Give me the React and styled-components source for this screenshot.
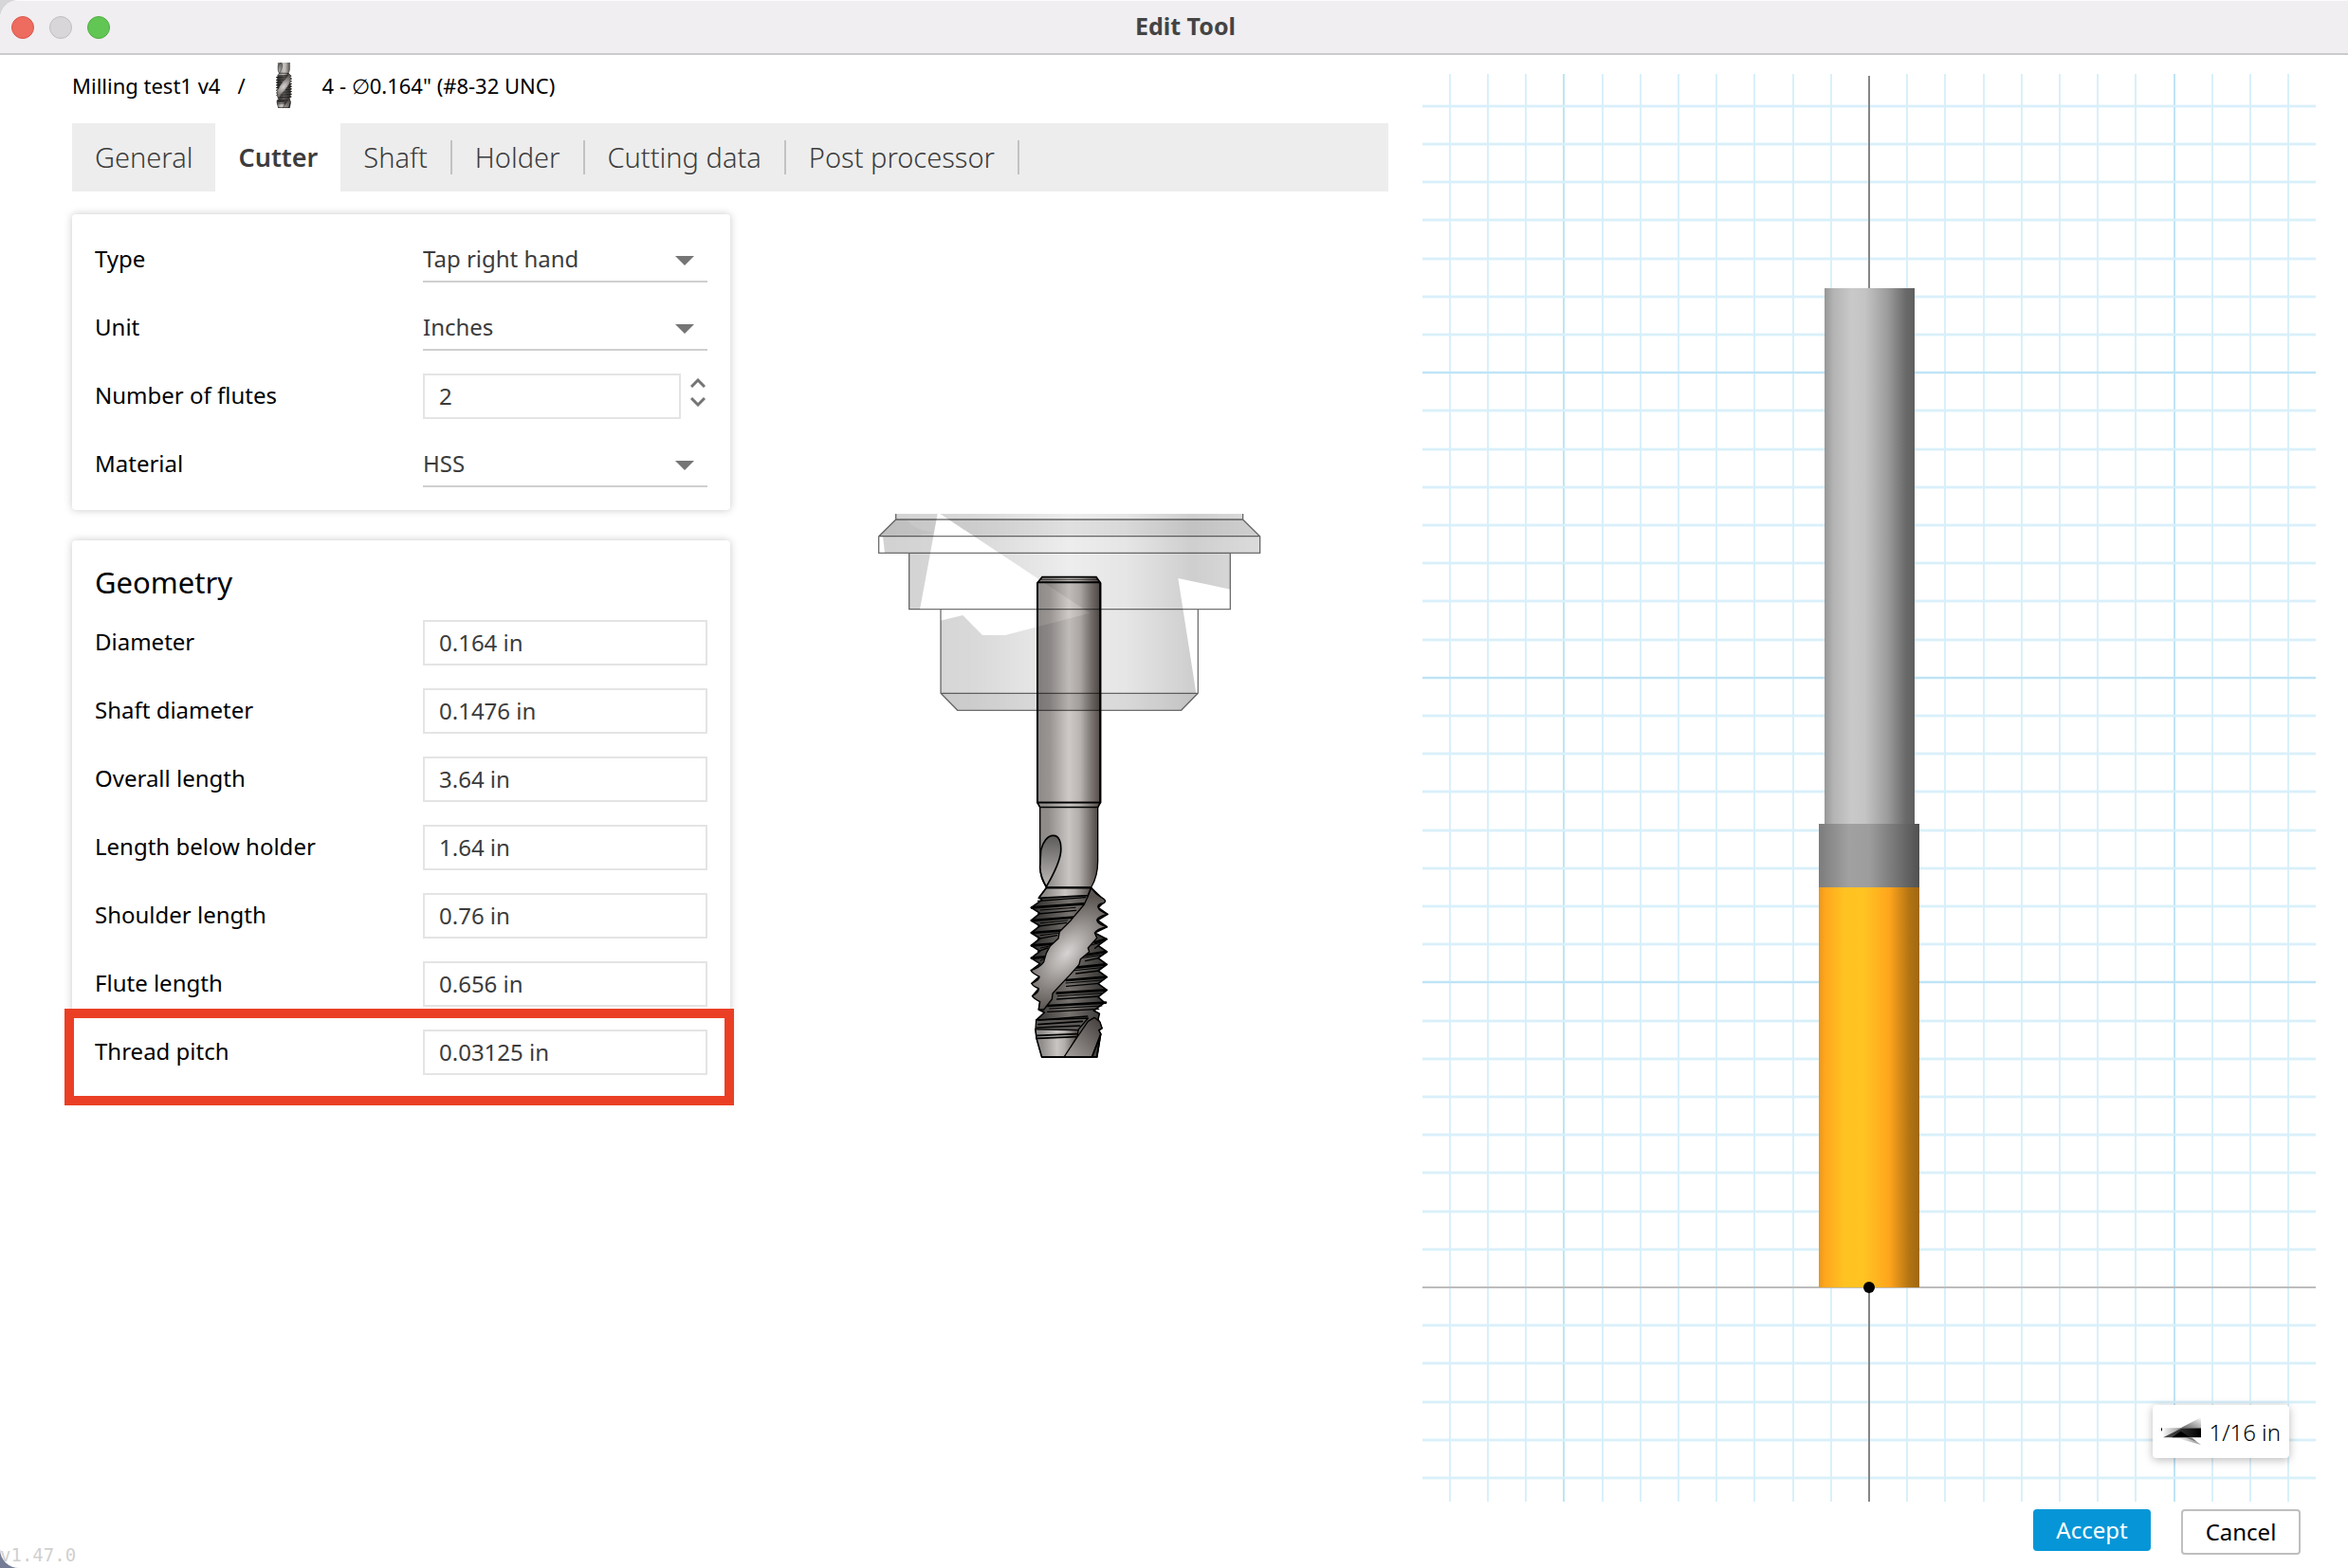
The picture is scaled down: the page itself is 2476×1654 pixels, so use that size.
import React, { useId, useState } from 'react';
import styled, { createGlobalStyle } from 'styled-components';

const tabs = ['General', 'Cutter', 'Shaft', 'Holder', 'Cutting data', 'Post processor'];

const geometry = [
    { id: 'diameter', label: 'Diameter', value: '0.164 in' },
    { id: 'shaft-diameter', label: 'Shaft diameter', value: '0.1476 in' },
    { id: 'overall-length', label: 'Overall length', value: '3.64 in' },
    { id: 'below-holder', label: 'Length below holder', value: '1.64 in' },
    { id: 'shoulder-length', label: 'Shoulder length', value: '0.76 in' },
    { id: 'flute-length', label: 'Flute length', value: '0.656 in' },
    { id: 'thread-pitch', label: 'Thread pitch', value: '0.03125 in', marked: true },
];

// lower part of the tap: neck, threads and point
const TapTip = () => {
    const id = useId();
    const left = [412, 453, 492, 532, 572];
    const right = [512, 552, 592, 632, 673, 713];
    return (
        <g strokeLinejoin="round" strokeLinecap="round">
            <defs>
                <linearGradient id={`${id}neck`}>
                    <stop offset="0" stopColor="#8b8886" />
                    <stop offset=".15" stopColor="#918e8c" />
                    <stop offset=".5" stopColor="#c9c5c2" />
                    <stop offset=".68" stopColor="#b1adaa" />
                    <stop offset="1" stopColor="#4f4845" />
                </linearGradient>
                <linearGradient id={`${id}drop`} x1="0" y1="0" x2="0" y2="1">
                    <stop offset="0" stopColor="#5c5a59" />
                    <stop offset="1" stopColor="#bdbab8" />
                </linearGradient>
                <linearGradient id={`${id}thread`}>
                    <stop offset="0" stopColor="#2c2b2a" />
                    <stop offset=".5" stopColor="#77736f" />
                    <stop offset="1" stopColor="#302e2d" />
                </linearGradient>
                <radialGradient id={`${id}flute`} gradientUnits="userSpaceOnUse" cx="0" cy="0" r="1" gradientTransform="translate(196 556) rotate(-50) scale(210 120)">
                    <stop offset="0" stopColor="#d6d4d3" />
                    <stop offset=".3" stopColor="#b3afad" />
                    <stop offset=".65" stopColor="#85807d" />
                    <stop offset="1" stopColor="#5a5451" />
                </radialGradient>
                <linearGradient id={`${id}end`} x1="1" y1="0" x2="0" y2="1">
                    <stop offset="0" stopColor="#3f3a38" />
                    <stop offset="1" stopColor="#a7a29f" />
                </linearGradient>
            </defs>
            <path d="M102 80H301L293 95H110Z" fill={`url(#${id}neck)`} stroke="#000" strokeWidth="5" />
            <path d="M110 95V280C110 315 120 330 130 348H272C288 322 293 300 293 265V95Z" fill={`url(#${id}neck)`} stroke="#000" strokeWidth="4" />
            <path d="M113 230C119 206 133 184 152 184C171 184 178 206 176 235C172 275 147 316 130 346C116 322 111 305 110 285Z" fill={`url(#${id}drop)`} stroke="#000" strokeWidth="5" />
            <path
                d="M130 350L108 380L116 388L82 412L110 430L82 453L110 470L82 492L110 510L82 532L110 550L82 572L110 590L82 611L108 630L84 652L106 668L86 692L110 710L106 735L124 744L98 768L108 782L96 797L99 825L116 885H290L302 812L296 800L306 794L294 765L298 748L280 738L314 713L294 695L322 673L294 653L322 632L294 612L322 592L294 572L322 552L294 532L322 512L283 492L322 473L292 452L324 433L294 412L316 392L272 350Z"
                fill={`url(#${id}thread)`}
                stroke="#000"
                strokeWidth="5"
            />
            <path d="M130 350H272L262 374L106 382Z" fill={`url(#${id}neck)`} stroke="#000" strokeWidth="5" />
            <g fill="none" stroke="#000">
                {left.map((y, i) => (
                    <g key={y}>
                        <path d={`M84 ${y}L${248 - i * 30} ${y - 12 + i * 2}`} strokeWidth="8" />
                        <path d={`M104 ${y - 21}L${254 - i * 30} ${y - 32}`} strokeWidth="4" />
                        <path d={`M112 ${y + 8}L${222 - i * 24} ${y}`} strokeWidth="3" />
                    </g>
                ))}
                {right.map((y, i) => (
                    <g key={y}>
                        <path d={`M${284 - i * 30} ${y + 10}L318 ${y}`} strokeWidth="8" />
                        <path d={`M${284 - i * 30} ${y + 29}L296 ${y + 20}`} strokeWidth="4" />
                        <path d={`M${270 - i * 26} ${y + 19}L306 ${y + 10}`} strokeWidth="3" />
                    </g>
                ))}
            </g>
            <path
                d="M272 350Q284 368 304 380Q324 390 312 398Q290 400 294 412Q298 424 324 433Q292 440 290 452Q292 465 322 473Q290 480 283 492L290 508L262 540L266 552L238 575L234 592L204 626L170 662L150 684L148 702L122 735L106 735L110 710Q90 700 86 692Q108 680 106 668Q86 660 84 652Q110 640 108 630Q84 620 82 611Q112 600 122 584L130 556L142 534L168 510L172 488L208 452L250 402L262 376Z"
                fill={`url(#${id}flute)`}
                stroke="#000"
                strokeWidth="4"
            />
            <path d="M96 797L99 825L116 885H188L228 820L232 796Z" fill={`url(#${id}neck)`} stroke="#000" strokeWidth="4" />
            <path d="M98 768L262 762L230 800L96 797Z" fill="#5e5a57" stroke="#000" strokeWidth="4" />
            <path d="M104 782L244 772M100 792L236 786M106 768L260 756" stroke="#000" strokeWidth="5" fill="none" />
            <path d="M100 826L224 821M100 817L226 812" stroke="#000" strokeWidth="5" />
            <path d="M282 760L300 774L306 794L296 800L302 812L274 885H186L228 822L262 772Z" fill={`url(#${id}end)`} stroke="#000" strokeWidth="4" />
            <path d="M302 815L276 882M116 885H290L302 812" stroke="#000" strokeWidth="5" fill="none" />
        </g>
    );
};

// holder and shank are drawn at three units to the pixel
const ToolPicture = () => (
    <Picture viewBox="60 60 1242 1740" role="img" aria-label="Tap in its holder">
        <defs>
            <linearGradient id="shank">
                <stop offset="0" stopColor="#8d8a88" />
                <stop offset=".2" stopColor="#9a9593" />
                <stop offset=".5" stopColor="#cfcac7" />
                <stop offset=".68" stopColor="#b9b4b1" />
                <stop offset=".85" stopColor="#7e7875" />
                <stop offset="1" stopColor="#544c49" />
            </linearGradient>
            <linearGradient id="holder" gradientUnits="userSpaceOnUse" x1="80" y1="0" x2="1286" y2="0">
                <stop offset="0" stopOpacity=".18" />
                <stop offset=".25" stopOpacity=".15" />
                <stop offset=".5" stopOpacity=".07" />
                <stop offset=".65" stopOpacity=".1" />
                <stop offset=".82" stopOpacity=".19" />
                <stop offset="1" stopOpacity=".14" />
            </linearGradient>
            <mask id="facets" maskUnits="userSpaceOnUse" x="0" y="0" width="1400" height="800">
                <rect width="1400" height="800" fill="#fff" />
                <path d="M266 66H274L748 380L480 450H408L346 387L268 406V370H210Z" fill="#000" />
                <path d="M1027 270L1192 305V369H1092V634H1084Z" fill="#000" />
                <path d="M80 138H93L99 190H80Z" fill="#000" />
            </mask>
        </defs>
        <path d="M582 284L597 266H768L781 284V980H582Z" fill="url(#shank)" stroke="#000" strokeWidth="5" />
        <path d="M582 283H781" stroke="#000" strokeWidth="6" />
        <path d="M592 274H772" stroke="#000" strokeWidth="2" />
        <g mask="url(#facets)">
            <path d="M134 66H1232V84L1286 137V190H1192V368H1090V634L1037 688H329L276 634V368H176V190H80V137L134 84Z" fill="url(#holder)" />
            <path d="M134 84H1232L1286 137H80Z" fillOpacity=".06" />
            <path d="M276 634H1090L1037 688H329Z" fillOpacity=".06" />
            <path d="M170 86Q190 116 260 126L190 137H80L134 84Z" fillOpacity=".04" />
        </g>
        <path
            d="M134 66V84H1232V66M134 84L80 137V190H1286V137L1232 84M80 137H1286M176 190V368H1192V190M276 368V634L329 688H1037L1090 634V368M276 634H1090"
            fill="none"
            stroke="#000"
            strokeOpacity=".55"
            strokeWidth="4"
        />
        <path d="M582 284V980M781 284V980" stroke="#000" strokeWidth="6" />
        <g transform="translate(480 900)">
            <TapTip />
        </g>
    </Picture>
);

const origin = { x: 471, y: 1280 };
const steps = (from, to) => Array.from({ length: to - from + 1 }, (_, i) => i + from);

const GridView = () => (
    <GridSvg viewBox="0 0 942 1506" preserveAspectRatio="xMidYMid slice" role="img" aria-label="Tool profile">
        <defs>
            <linearGradient id="steel">
                <stop offset="0" stopColor="#969696" />
                <stop offset=".1" stopColor="#b4b4b4" />
                <stop offset=".3" stopColor="#c9c9c9" />
                <stop offset=".45" stopColor="#c4c4c4" />
                <stop offset=".7" stopColor="#9c9c9c" />
                <stop offset=".9" stopColor="#6a6a6a" />
                <stop offset="1" stopColor="#5f5f5f" />
            </linearGradient>
            <linearGradient id="collar">
                <stop offset="0" stopColor="#7c7c7c" />
                <stop offset=".3" stopColor="#a1a1a1" />
                <stop offset=".5" stopColor="#9d9d9d" />
                <stop offset=".8" stopColor="#707070" />
                <stop offset="1" stopColor="#505050" />
            </linearGradient>
            <linearGradient id="cutter">
                <stop offset="0" stopColor="#e8961c" />
                <stop offset=".06" stopColor="#ffa61e" />
                <stop offset=".25" stopColor="#ffc221" />
                <stop offset=".45" stopColor="#ffc322" />
                <stop offset=".7" stopColor="#ffa51c" />
                <stop offset=".9" stopColor="#b27413" />
                <stop offset="1" stopColor="#9f6710" />
            </linearGradient>
        </defs>
        {steps(-11, 11).filter((n) => n !== 0).map((n) => (
            <rect
                key={n}
                x={Math.round(origin.x + n * 40.2) - 1}
                width="2"
                height="1506"
                fill={n % 8 === 0 ? '#bfe4f5' : '#d9f0fa'}
            />
        ))}
        {steps(-5, 31).filter((n) => n !== 0).map((n) => (
            <g key={n}>
                <rect y={Math.round(origin.y - n * 40.2) - 2} width="942" height="4" fill="#d2eefa" opacity=".35" />
                <rect
                    y={Math.round(origin.y - n * 40.2) - 1}
                    width="942"
                    height="2"
                    fill={n % 8 === 0 ? '#bfe4f5' : '#d9f0fa'}
                />
            </g>
        ))}
        <rect y="1279" width="942" height="2" fill="#bdbdbd" />
        <rect x="470" y="2" width="2" height="1504" fill="#868686" />
        <rect x="424" y="226" width="95" height="566" fill="url(#steel)" />
        <rect x="418" y="791" width="106" height="68" fill="url(#collar)" />
        <rect x="418" y="858" width="106" height="422" fill="url(#cutter)" />
        <circle cx="471" cy="1280" r="6" />
    </GridSvg>
);

const ScaleIcon = () => (
    <svg width="42" height="30" viewBox="0 0 126 90" aria-hidden="true">
        <defs>
            <linearGradient id="beam">
                <stop offset="0" stopColor="#555" />
                <stop offset="1" stopColor="#000" />
            </linearGradient>
            <linearGradient id="haze">
                <stop offset="0" stopColor="#fff" />
                <stop offset="1" stopColor="#8f8f8f" />
            </linearGradient>
            <linearGradient id="fan" x1="0" y1="1" x2="1" y2="0">
                <stop offset="0" stopColor="#444" />
                <stop offset=".5" stopColor="#999" />
                <stop offset="1" stopColor="#fff" />
            </linearGradient>
        </defs>
        <path d="M3 34H66L3 64Z" fill="url(#haze)" />
        <path d="M6 64L66 34H126V64Z" fill="url(#beam)" />
        <path d="M46 42L126 0V34H66Z" fill="url(#fan)" />
        <path d="M34 64L62 44L92 64Z" />
        <path d="M50 66H96L126 87Z" fill="url(#haze)" />
        <path d="M76 64H96L114 78Z" fill="#777" />
        <rect y="34" width="3" height="9" />
    </svg>
);

const Dropdown = ({ id, label, value }) => (
    <Row>
        <Label htmlFor={id}>{label}</Label>
        <SelectBox>
            <Select id={id} defaultValue={value}>
                <option>{value}</option>
            </Select>
            <Arrow viewBox="0 0 20 10" aria-hidden="true">
                <path d="M0 0H20L10 10Z" />
            </Arrow>
        </SelectBox>
    </Row>
);

const App = () => {
    const [active, setActive] = useState('Cutter');
    const [flutes, setFlutes] = useState(2);

    return (
        <Window>
            <GlobalStyle />
            <TitleBar>
                <Lights>
                    <Light $color="#ed6b5f" $edge="#d9584d" />
                    <Light $color="#d8d6d9" $edge="#bfbdc0" />
                    <Light $color="#62c655" $edge="#51ac44" />
                </Lights>
                <Title>Edit Tool</Title>
            </TitleBar>
            <Body>
                <Main>
                    <Breadcrumb>
                        <span>Milling test1 v4</span>
                        <Slash>/</Slash>
                        <TapIcon viewBox="78 180 250 710" preserveAspectRatio="none" aria-hidden="true">
                            <TapTip />
                        </TapIcon>
                        <span>4 - ∅0.164" (#8-32 UNC)</span>
                    </Breadcrumb>
                    <TabBar role="tablist">
                        {tabs.map((name, i) => (
                            <React.Fragment key={name}>
                                <Tab role="tab" aria-selected={name === active} $active={name === active} onClick={() => setActive(name)}>
                                    {name}
                                </Tab>
                                {i > 1 && <Divider />}
                            </React.Fragment>
                        ))}
                    </TabBar>
                    <Content>
                        <Forms>
                            <Card>
                                <Dropdown id="type" label="Type" value="Tap right hand" />
                                <Dropdown id="unit" label="Unit" value="Inches" />
                                <Row>
                                    <Label htmlFor="flutes">Number of flutes</Label>
                                    <NumberBox>
                                        <Input id="flutes" value={flutes} onChange={(e) => setFlutes(Number(e.target.value) || 0)} />
                                        <Stepper>
                                            <Step aria-label="More flutes" onClick={() => setFlutes(flutes + 1)}>
                                                <svg width="16" height="10" viewBox="0 0 16 10"><path d="M1 9L8 2L15 9" /></svg>
                                            </Step>
                                            <Step aria-label="Fewer flutes" onClick={() => setFlutes(flutes - 1)}>
                                                <svg width="16" height="10" viewBox="0 0 16 10"><path d="M1 1L8 8L15 1" /></svg>
                                            </Step>
                                        </Stepper>
                                    </NumberBox>
                                </Row>
                                <Dropdown id="material" label="Material" value="HSS" />
                            </Card>
                            <Card>
                                <Heading>Geometry</Heading>
                                {geometry.map(({ id, label, value, marked }) => (
                                    <Row key={id} $marked={marked}>
                                        <Label htmlFor={id}>{label}</Label>
                                        <Input id={id} defaultValue={value} />
                                    </Row>
                                ))}
                            </Card>
                        </Forms>
                        <Preview>
                            <ToolPicture />
                        </Preview>
                    </Content>
                </Main>
                <Side>
                    <Viewport>
                        <GridView />
                        <Scale>
                            <ScaleIcon />
                            1/16 in
                        </Scale>
                    </Viewport>
                    <Actions>
                        <Accept>Accept</Accept>
                        <Cancel>Cancel</Cancel>
                    </Actions>
                </Side>
            </Body>
            <Version>v1.47.0</Version>
        </Window>
    );
};

const GlobalStyle = createGlobalStyle`
* {
    box-sizing: border-box;
}
body {
    margin: 0;
    background: linear-gradient(#d6d6d8, #747c96);
    font-family: "Noto Sans", "Open Sans", sans-serif;
    font-size: 24px;
    color: #000;
}
button, input, select {
    font: inherit;
    margin: 0;
}
`

const Window = styled.div`
position: relative;
display: flex;
flex-direction: column;
min-height: 100vh;
overflow: hidden;
background: #fff;
border-radius: 20px 0 0 20px;
`

const TitleBar = styled.header`
display: flex;
align-items: center;
height: 58px;
padding: 0 12px;
background: #f0eef1;
border-top: 1px solid #fbfafb;
border-bottom: 2px solid #cbcacd;
`

const Lights = styled.div`
display: flex;
gap: 16px;
width: 104px;
`

const Light = styled.span`
width: 24px;
height: 24px;
border-radius: 50%;
background: ${(props) => props.$color};
border: 1px solid ${(props) => props.$edge};
`

const Title = styled.h1`
flex: 1;
margin: 0;
padding: 0 80px 4px 0;
text-align: center;
font-size: 25px;
line-height: 32px;
color: #444;
`

const Body = styled.div`
flex: 1;
display: grid;
grid-template-columns: minmax(0, 1388fr) minmax(0, 942fr);
gap: 36px;
padding: 0 34px 0 76px;
`

const Main = styled.main`
display: flex;
flex-direction: column;
`

const Breadcrumb = styled.nav`
display: flex;
align-items: center;
height: 72px;
padding-bottom: 8px;
font-size: 22px;
white-space: pre;
`

const Slash = styled.span`
margin: 0 32px 0 18px;
`

const TapIcon = styled.svg`
width: 17px;
height: 48px;
margin-right: 32px;
`

const TabBar = styled.div`
display: flex;
align-items: center;
height: 72px;
background: #ededed;
`

const Tab = styled.button`
height: 72px;
padding: 0 24px 2px;
border: 0;
background: ${(props) => (props.$active ? '#fff' : 'transparent')};
color: #3c3c3c;
font-size: ${(props) => (props.$active ? 27 : 29)}px;
font-weight: ${(props) => (props.$active ? 600 : 300)};
`

const Divider = styled.span`
width: 2px;
height: 36px;
background: #c2c2c2;
`

const Content = styled.div`
display: flex;
padding-top: 24px;
`

const Forms = styled.form`
flex: 0 0 50%;
display: flex;
flex-direction: column;
gap: 32px;
`

const Card = styled.section`
display: flex;
flex-direction: column;
gap: 24px;
padding: 24px;
border-radius: 4px;
box-shadow: 0 0 8px rgba(0, 0, 0, 0.22);
`

const Heading = styled.h2`
margin: 0 0 -4px;
font-size: 31px;
font-weight: 400;
line-height: 40px;
`

const Row = styled.div`
position: relative;
display: grid;
grid-template-columns: 1fr 300px;
align-items: center;
height: 48px;

/* marker drawn over the card's edges */
${(props) => props.$marked && `
&::after {
    content: "";
    position: absolute;
    inset: -22px -28px -32px -32px;
    border: 10px solid #ea3f25;
    pointer-events: none;
}
`}
`

const Label = styled.label`
padding-bottom: 2px;
line-height: 46px;
`

const Input = styled.input`
width: 100%;
min-width: 0;
height: 48px;
padding: 0 15px 2px;
border: 2px solid #e4e4e4;
background: #fff;
color: #3c3c3c;
`

const SelectBox = styled.div`
position: relative;
`

const Select = styled.select`
appearance: none;
display: block;
width: 100%;
height: 48px;
padding: 0 0 2px;
border: 0;
border-bottom: 2px solid #cfcfcf;
border-radius: 0;
background: transparent;
color: #3c3c3c;
`

const Arrow = styled.svg`
position: absolute;
top: 20px;
right: 14px;
width: 20px;
height: 10px;
fill: #757575;
pointer-events: none;
`

const NumberBox = styled.div`
display: grid;
grid-template-columns: 1fr 20px;
gap: 8px;
`

const Stepper = styled.div`
display: flex;
flex-direction: column;
gap: 10px;
padding-top: 5px;
`

const Step = styled.button.attrs({ type: 'button' })`
display: flex;
padding: 0 2px;
border: 0;
background: none;

path {
    fill: none;
    stroke: #757575;
    stroke-width: 3;
}
`

const Preview = styled.div`
flex: 1;
display: flex;
justify-content: center;
align-items: flex-start;
padding: 314px 0 0 20px;
`

const Picture = styled.svg`
width: 414px;
height: 580px;
`

const Side = styled.aside`
display: flex;
flex-direction: column;
padding: 20px 0 14px;
`

const Viewport = styled.div`
position: relative;
flex: 1;
display: flex;
min-height: 600px;
`

const GridSvg = styled.svg`
flex: 1;
width: 100%;
height: 100%;
`

const Scale = styled.div`
position: absolute;
right: 28px;
bottom: 46px;
display: flex;
align-items: center;
gap: 8px;
height: 56px;
padding: 0 9px;
border-radius: 4px;
background: #fff;
box-shadow: 0 2px 10px rgba(0, 0, 0, 0.28);
font-weight: 300;
`

const Actions = styled.footer`
display: flex;
gap: 32px;
align-items: flex-start;
justify-content: flex-end;
padding: 8px 16px 0 0;
`

const Accept = styled.button`
width: 124px;
height: 44px;
padding: 0 0 2px;
border: 0;
border-radius: 4px;
background: #0696d7;
color: #fff;
`

const Cancel = styled.button`
width: 126px;
height: 48px;
padding: 0 0 2px;
border: 2px solid #bfbfbf;
border-radius: 4px;
background: #fff;
color: #000;
`

const Version = styled.small`
position: absolute;
left: 0;
bottom: 2px;
font-family: "DejaVu Sans Mono", monospace;
font-size: 19px;
line-height: 24px;
color: #d0d0d0;
`

export default App;
